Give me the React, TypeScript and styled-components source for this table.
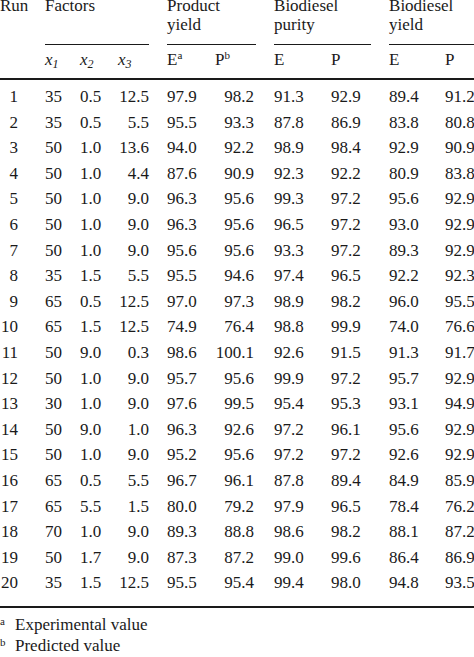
import React from 'react'
import styled, { createGlobalStyle } from 'styled-components'

const GlobalStyle = createGlobalStyle`
  html, body {
    margin: 0;
    padding: 0;
    background: #fff;
    overflow: hidden;
  }
  body {
    font-family: "Liberation Serif", "Times New Roman", serif;
    color: #1a1a1a;
  }
`

const serif = `"Liberation Serif", "Times New Roman", serif`

type Align = 'left' | 'right'

interface IColumn {
  width: number;
  align: Align;
  pr: number;
}

const columns: IColumn[] = [
  { width: 45, align: 'right', pr: 27 },
  { width: 35, align: 'left', pr: 0 },
  { width: 30, align: 'left', pr: 0 },
  { width: 57, align: 'right', pr: 18 },
  { width: 47, align: 'left', pr: 0 },
  { width: 60, align: 'right', pr: 20 },
  { width: 57, align: 'left', pr: 0 },
  { width: 58, align: 'left', pr: 0 },
  { width: 56, align: 'left', pr: 0 },
  { width: 60, align: 'left', pr: 0 },
]

const rows: string[][] = [
  ['1', '35', '0.5', '12.5', '97.9', '98.2', '91.3', '92.9', '89.4', '91.2'],
  ['2', '35', '0.5', '5.5', '95.5', '93.3', '87.8', '86.9', '83.8', '80.8'],
  ['3', '50', '1.0', '13.6', '94.0', '92.2', '98.9', '98.4', '92.9', '90.9'],
  ['4', '50', '1.0', '4.4', '87.6', '90.9', '92.3', '92.2', '80.9', '83.8'],
  ['5', '50', '1.0', '9.0', '96.3', '95.6', '99.3', '97.2', '95.6', '92.9'],
  ['6', '50', '1.0', '9.0', '96.3', '95.6', '96.5', '97.2', '93.0', '92.9'],
  ['7', '50', '1.0', '9.0', '95.6', '95.6', '93.3', '97.2', '89.3', '92.9'],
  ['8', '35', '1.5', '5.5', '95.5', '94.6', '97.4', '96.5', '92.2', '92.3'],
  ['9', '65', '0.5', '12.5', '97.0', '97.3', '98.9', '98.2', '96.0', '95.5'],
  ['10', '65', '1.5', '12.5', '74.9', '76.4', '98.8', '99.9', '74.0', '76.6'],
  ['11', '50', '9.0', '0.3', '98.6', '100.1', '92.6', '91.5', '91.3', '91.7'],
  ['12', '50', '1.0', '9.0', '95.7', '95.6', '99.9', '97.2', '95.7', '92.9'],
  ['13', '30', '1.0', '9.0', '97.6', '99.5', '95.4', '95.3', '93.1', '94.9'],
  ['14', '50', '9.0', '1.0', '96.3', '92.6', '97.2', '96.1', '95.6', '92.9'],
  ['15', '50', '1.0', '9.0', '95.2', '95.6', '97.2', '97.2', '92.6', '92.9'],
  ['16', '65', '0.5', '5.5', '96.7', '96.1', '87.8', '89.4', '84.9', '85.9'],
  ['17', '65', '5.5', '1.5', '80.0', '79.2', '97.9', '96.5', '78.4', '76.2'],
  ['18', '70', '1.0', '9.0', '89.3', '88.8', '98.6', '98.2', '88.1', '87.2'],
  ['19', '50', '1.7', '9.0', '87.3', '87.2', '99.0', '99.6', '86.4', '86.9'],
  ['20', '35', '1.5', '12.5', '95.5', '95.4', '99.4', '98.0', '94.8', '93.5'],
]

const Page = styled.div`
  width: 474px;
  margin-top: -4px;
  overflow: hidden;
  font-family: ${serif};
  font-size: 17px;
  color: #1a1a1a;
`

const Table = styled.table`
  width: 505px;
  table-layout: fixed;
  border-collapse: separate;
  border-spacing: 0;
  font-family: ${serif};
  font-size: 17px;
  color: #1a1a1a;
`

const HeadCell = styled.th<{ $pl?: number }>`
  padding: 0 0 0 ${p => p.$pl || 0}px;
  font-family: ${serif};
  font-size: 17px;
  font-weight: normal;
  text-align: left;
  vertical-align: top;
  line-height: 19px;
`

const RunHead = styled(HeadCell)`
  border-bottom: 2px solid #1a1a1a;
`

const GroupLabel = styled.div`
  box-sizing: border-box;
  height: 49px;
  margin-right: 18px;
  border-bottom: 1px solid #1a1a1a;
`

const SubHead = styled(HeadCell)`
  padding-top: 5px;
  padding-bottom: 9px;
  border-bottom: 2px solid #1a1a1a;
`

const Var = styled.i`
  font-style: italic;
`

const Sub = styled.sub`
  font-size: 12px;
  font-style: italic;
  vertical-align: -3px;
  line-height: 0;
`

const Sup = styled.sup`
  font-size: 11px;
  vertical-align: 6px;
  line-height: 0;
`

const Body = styled.tbody`
  tr:first-child td {
    padding-top: 4px;
  }
  tr:last-child td {
    padding-bottom: 10px;
    border-bottom: 2px solid #1a1a1a;
  }
`

const Cell = styled.td<{ $align: Align; $pr: number }>`
  padding: 0 ${p => p.$pr}px 0 0;
  font-family: ${serif};
  font-size: 17px;
  text-align: ${p => p.$align};
  line-height: 25.6px;
  white-space: nowrap;
`

const Notes = styled.div`
  margin-top: 6px;
  font-family: ${serif};
  font-size: 17px;
  line-height: 21px;
`

const Note = styled.div`
  display: flex;
`

const NoteMark = styled.span`
  width: 15px;
  flex: none;
  font-size: 11px;
  line-height: 14px;
`

function X({ n }: { n: number }) {
  return (
    <>
      <Var>x</Var>
      <Sub>{n}</Sub>
    </>
  )
}

export default function App() {
  return (
    <Page>
      <GlobalStyle />
      <Table>
        <colgroup>
          {columns.map((c, i) => (
            <col key={i} style={{ width: c.width }} />
          ))}
        </colgroup>
        <thead>
          <tr>
            <RunHead rowSpan={2}>Run</RunHead>
            <HeadCell colSpan={3}>
              <GroupLabel>Factors</GroupLabel>
            </HeadCell>
            <HeadCell colSpan={2}>
              <GroupLabel>Product<br />yield</GroupLabel>
            </HeadCell>
            <HeadCell colSpan={2}>
              <GroupLabel>Biodiesel<br />purity</GroupLabel>
            </HeadCell>
            <HeadCell colSpan={2}>
              <GroupLabel>Biodiesel<br />yield</GroupLabel>
            </HeadCell>
          </tr>
          <tr>
            <SubHead><X n={1} /></SubHead>
            <SubHead><X n={2} /></SubHead>
            <SubHead $pl={8}><X n={3} /></SubHead>
            <SubHead>E<Sup>a</Sup></SubHead>
            <SubHead $pl={1}>P<Sup>b</Sup></SubHead>
            <SubHead>E</SubHead>
            <SubHead>P</SubHead>
            <SubHead>E</SubHead>
            <SubHead>P</SubHead>
          </tr>
        </thead>
        <Body>
          {rows.map(r => (
            <tr key={r[0]}>
              {r.map((v, i) => (
                <Cell key={i} $align={columns[i].align} $pr={columns[i].pr}>
                  {v}
                </Cell>
              ))}
            </tr>
          ))}
        </Body>
      </Table>
      <Notes>
        <Note>
          <NoteMark>a</NoteMark>
          <span>Experimental value</span>
        </Note>
        <Note>
          <NoteMark>b</NoteMark>
          <span>Predicted value</span>
        </Note>
      </Notes>
    </Page>
  )
}
